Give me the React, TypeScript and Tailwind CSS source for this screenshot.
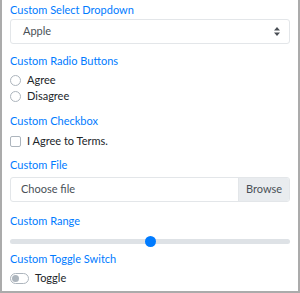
export default function App() {
  const label = "h-4 leading-4 text-[11px] text-[#007bff]";
  return (
    <div className="w-[300px] h-[293px] overflow-hidden bg-white border-l-2 border-r-2 border-b-2 border-[#ababab] px-[8px] pt-[2px] font-['Lato','Noto_Sans',sans-serif] text-[#212529]">
      <div className={label}>Custom Select Dropdown</div>
      <div className="mt-[1px] h-[25px] rounded-[3px] border border-[#e3e6e9] flex items-center justify-between pl-[12px] pr-[9px] text-[11px] text-[#495057]">
        <span>Apple</span>
        <svg width="6" height="9" viewBox="0 0 6 9">
          <path d="M3 0L6 3.5H0Z M3 9L0 5.5H6Z" fill="#4a4f55" />
        </svg>
      </div>

      <div className={`${label} mt-[9px]`}>Custom Radio Buttons</div>
      <div className="mt-[3px] h-4 flex items-center gap-[6px] text-[11px]">
        <span className="w-[11px] h-[11px] rounded-full border border-[#adb5bd] bg-white" />
        Agree
      </div>
      <div className="h-4 flex items-center gap-[6px] text-[11px]">
        <span className="w-[11px] h-[11px] rounded-full border border-[#adb5bd] bg-white" />
        Disagree
      </div>

      <div className={`${label} mt-[9px]`}>Custom Checkbox</div>
      <div className="mt-[4px] h-4 flex items-center gap-[6px] text-[11px]">
        <span className="w-[11px] h-[11px] rounded-[2px] border border-[#adb5bd] bg-white" />
        I Agree to Terms.
      </div>

      <div className={`${label} mt-[8px]`}>Custom File</div>
      <div className="mt-[4px] h-[25px] rounded-[3px] border border-[#e3e6e9] flex items-stretch text-[11px] text-[#495057] overflow-hidden">
        <span className="flex-1 flex items-center pl-[10px]">Choose file</span>
        <span className="w-[51px] flex items-center justify-center bg-[#e9ecef] border-l border-[#e3e6e9]">Browse</span>
      </div>

      <div className={`${label} mt-[11px]`}>Custom Range</div>
      <div className="mt-[4px] h-4 relative flex items-center">
        <div className="w-full h-[5px] rounded-full bg-[#dee2e6]" />
        <span className="absolute left-[135px] w-[11px] h-[11px] rounded-full bg-[#007bff]" />
      </div>

      <div className={`${label} mt-[2px]`}>Custom Toggle Switch</div>
      <div className="mt-[3px] h-4 flex items-center gap-[6px] text-[11px]">
        <span className="w-[19px] h-[11px] rounded-full border border-[#adb5bd] bg-white flex items-center px-[1px]">
          <span className="w-[7px] h-[7px] rounded-full bg-[#adb5bd]" />
        </span>
        Toggle
      </div>
    </div>
  );
}
